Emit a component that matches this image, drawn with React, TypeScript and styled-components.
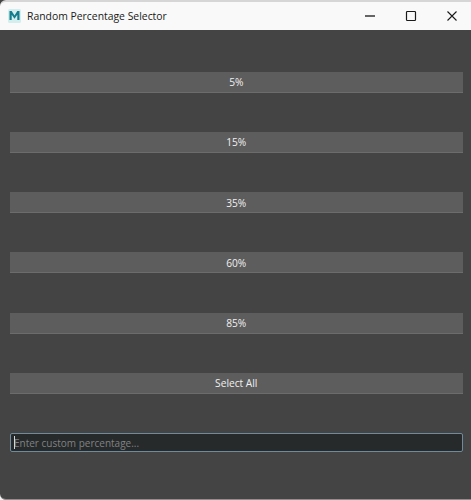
import React from "react";
import styled, { createGlobalStyle } from "styled-components";

const GlobalStyle = createGlobalStyle`
  html, body {
    margin: 0;
    padding: 0;
    background: #f4f4f4;
  }
`;

const Window = styled.div`
  width: 471px;
  height: 500px;
  display: flex;
  flex-direction: column;
  box-sizing: border-box;
  background: #444444;
  border-bottom: 1px solid #8f8f8f;
  border-bottom-left-radius: 6px;
  overflow: hidden;
`;

const TitleBar = styled.div`
  height: 30px;
  box-sizing: border-box;
  display: flex;
  align-items: center;
  padding-left: 8px;
  background: #f8f9f8;
  border-top: 2px solid #d6d6d6;
  border-top-left-radius: 6px;
  font-family: "Open Sans", "Noto Sans", sans-serif;
  font-size: 10.4px;
  color: #1a1a1a;
`;

const AppIcon = styled.svg`
  width: 13px;
  height: 14px;
  margin-right: 6px;
  flex: none;
`;

const Title = styled.span`
  flex: 1;
  white-space: nowrap;
`;

const WindowControls = styled.div`
  height: 100%;
  display: flex;
  gap: 3px;
`;

const WindowButton = styled.div`
  width: 38px;
  height: 100%;
  display: flex;
  align-items: center;
  justify-content: center;
`;

const Content = styled.div`
  flex: 1;
  display: flex;
  flex-direction: column;
  padding: 41.5px 8.5px 0 10px;
`;

const ButtonList = styled.div`
  display: flex;
  flex-direction: column;
  gap: 39.3px;
`;

const PercentButton = styled.div`
  height: 21px;
  box-sizing: border-box;
  display: flex;
  align-items: center;
  justify-content: center;
  padding-top: 1px;
  background: #5d5d5d;
  border-bottom: 1px solid #6c6c6c;
  color: #f0f0f0;
  font-family: "Open Sans", "Noto Sans", sans-serif;
  font-size: 10.2px;
`;

const InputField = styled.div`
  position: relative;
  margin-top: 39px;
`;

const CustomInput = styled.input`
  display: block;
  width: 100%;
  height: 19px;
  box-sizing: border-box;
  padding: 1px 0 0 3px;
  background: #272a2b;
  border: 1.5px solid #6f8a9a;
  border-radius: 2px;
  outline: none;
  color: #e0e0e0;
  font-family: "Open Sans", "Noto Sans", sans-serif;
  font-size: 10px;

  &::placeholder {
    color: #808283;
    opacity: 1;
  }
`;

const Caret = styled.span`
  position: absolute;
  left: 3.5px;
  top: 3px;
  width: 1px;
  height: 13px;
  background: #d0d8dc;
`;

const percentages = ["5%", "15%", "35%", "60%", "85%", "Select All"];

export default function App() {
  return (
    <>
      <GlobalStyle />
      <Window>
        <TitleBar>
          <AppIcon viewBox="0 0 13 14">
            <rect x="0" y="0" width="13" height="14" rx="1.5" fill="#d4eeee" />
            <path d="M1.5 11V2h2.2L6.5 6.4 9.3 2h2.2v9H9.3V5.8L6.5 9.8 3.7 5.8V11Z" fill="#127d8c" />
          </AppIcon>
          <Title>Random Percentage Selector</Title>
          <WindowControls>
            <WindowButton>
              <svg width="12" height="12" viewBox="0 0 12 12">
                <path d="M1 6h10" stroke="#333" strokeWidth="1.4" fill="none" />
              </svg>
            </WindowButton>
            <WindowButton>
              <svg width="12" height="12" viewBox="0 0 12 12">
                <rect x="1.5" y="1.5" width="9" height="9" rx="0.8" stroke="#1a1a1a" strokeWidth="1.2" fill="none" />
              </svg>
            </WindowButton>
            <WindowButton>
              <svg width="12" height="12" viewBox="0 0 12 12">
                <path d="M1.5 1.5l9 9M10.5 1.5l-9 9" stroke="#1a1a1a" strokeWidth="1.1" fill="none" />
              </svg>
            </WindowButton>
          </WindowControls>
        </TitleBar>
        <Content>
          <ButtonList>
            {percentages.map((label) => (
              <PercentButton key={label}>{label}</PercentButton>
            ))}
          </ButtonList>
          <InputField>
            <CustomInput placeholder="Enter custom percentage..." />
            <Caret />
          </InputField>
        </Content>
      </Window>
    </>
  );
}
